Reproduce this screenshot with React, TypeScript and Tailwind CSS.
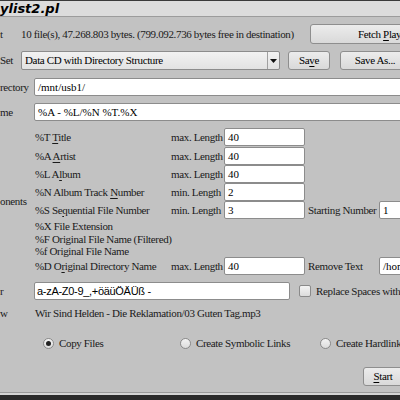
import type { ReactNode } from 'react';

const serif = { fontFamily: '"Liberation Serif", "DejaVu Serif", serif' };

function U({ children }: { children: ReactNode }) {
  return <span className="underline underline-offset-2">{children}</span>;
}

function Field({ value, className = '' }: { value: string; className?: string }) {
  return (
    <div
      className={`flex h-[18px] shrink-0 items-center overflow-hidden whitespace-nowrap rounded-[2px] border border-[#8c8c8c] bg-white pl-[3px] text-[11px] tracking-normal text-black ${className}`}
    >
      {value}
    </div>
  );
}

function Button({ children, className = '' }: { children: ReactNode; className?: string }) {
  return (
    <div
      className={`flex shrink-0 items-center justify-center whitespace-nowrap rounded-[3px] border border-[#8e8e8e] bg-gradient-to-b from-[#ececec] to-[#d9d9d9] text-black ${className}`}
    >
      <span>{children}</span>
    </div>
  );
}

function Radio({ checked }: { checked?: boolean }) {
  return (
    <div className="flex h-[11px] w-[11px] shrink-0 items-center justify-center rounded-full border border-[#8a8a8a] bg-gradient-to-b from-[#f4f4f4] to-[#dcdcdc]">
      {checked && <div className="h-[5px] w-[5px] rounded-full bg-[#222]" />}
    </div>
  );
}

function CompRow({
  name,
  len,
  value,
  extraLabel,
  extraValue,
}: {
  name: ReactNode;
  len?: string;
  value?: string;
  extraLabel?: string;
  extraValue?: string;
}) {
  return (
    <div className="flex h-[18px] items-center">
      <div className="w-[137px] shrink-0 whitespace-nowrap pl-[1px]">{name}</div>
      {len && (
        <>
          <div className="w-[53px] shrink-0 whitespace-nowrap">{len}</div>
          <Field value={value ?? ''} className="w-[81px]" />
        </>
      )}
      {extraLabel && (
        <>
          <div className="ml-[3px] w-[71px] shrink-0 whitespace-nowrap">{extraLabel}</div>
          <Field value={extraValue ?? ''} className="w-[40px]" />
        </>
      )}
    </div>
  );
}

export default function App() {
  return (
    <div
      className="flex h-[400px] w-[400px] flex-col overflow-hidden bg-[#c2c2c2] text-[11px] tracking-[-0.35px] text-[#1a1a1a]"
      style={serif}
    >
      {/* title bar */}
      <div className="flex h-[17px] shrink-0 items-center border-t border-b border-t-[#3a3a3a] border-b-[#9c9c9c] bg-[#dcdcdc]">
        <span
          className="text-[13px] font-bold italic tracking-normal text-black"
          style={{ fontFamily: '"DejaVu Sans", "Liberation Sans", sans-serif' }}
        >
          ylist2.pl
        </span>
      </div>

      {/* status */}
      <div className="mt-[7px] flex h-[20px] items-center">
        <div className="w-[21px] shrink-0">t</div>
        <div className="w-[289px] shrink-0 whitespace-nowrap">
          10 file(s), 47.268.803 bytes. (799.092.736 bytes free in destination)
        </div>
        <Button className="h-[20px] w-[110px] justify-start pl-[47px]">
          Fetch <U>P</U>lay
        </Button>
      </div>

      {/* preset */}
      <div className="mt-[7px] flex h-[19px] items-center">
        <div className="w-[21px] shrink-0">Set</div>
        <div className="flex h-[19px] w-[259px] shrink-0 items-center rounded-[2px] border border-[#8c8c8c] bg-gradient-to-b from-[#f2f2f2] to-[#e2e2e2]">
          <div className="flex-1 whitespace-nowrap pl-[3px] text-black">Data CD with Directory Structure</div>
          <div className="flex h-full w-[12px] items-center justify-center border-l border-[#a0a0a0]">
            <svg width="7" height="4" viewBox="0 0 7 4">
              <path d="M0 0h7L3.5 4z" fill="#111" />
            </svg>
          </div>
        </div>
        <Button className="ml-[8px] h-[19px] w-[42px]">
          Sa<U>v</U>e
        </Button>
        <Button className="ml-[10px] h-[19px] w-[70px]">Save As...</Button>
      </div>

      {/* directory */}
      <div className="mt-[8px] flex h-[18px] items-center">
        <div className="w-[34px] shrink-0 whitespace-nowrap">rectory</div>
        <Field value="/mnt/usb1/" className="w-[380px]" />
      </div>

      {/* name */}
      <div className="mt-[7px] flex h-[18px] items-center">
        <div className="w-[34px] shrink-0">me</div>
        <Field value="%A - %L/%N %T.%X" className="w-[380px]" />
      </div>

      {/* components */}
      <div className="mt-[7px] flex">
        <div className="flex w-[34px] shrink-0 items-center">onents</div>
        <div className="flex flex-col">
          <CompRow name={<>%T <U>T</U>itle</>} len="max. Length" value="40" />
          <div className="h-[1px]" />
          <CompRow name={<>%A <U>A</U>rtist</>} len="max. Length" value="40" />
          <CompRow name={<>%L A<U>l</U>bum</>} len="max. Length" value="40" />
          <CompRow name={<>%N Album Track <U>N</U>umber</>} len="min. Length" value="2" />
          <CompRow
            name={<>%S Se<U>q</U>uential File Number</>}
            len="min. Length"
            value="3"
            extraLabel="Starting Number"
            extraValue="1"
          />
          <div className="mt-[1px] flex h-[13px] items-center pl-[1px]">%X File Extension</div>
          <div className="flex h-[12px] items-center pl-[1px]">%F Original File Name (Filtered)</div>
          <div className="flex h-[12px] items-center pl-[1px]">%f Original File Name</div>
          <CompRow
            name={<>%D O<U>r</U>iginal Directory Name</>}
            len="max. Length"
            value="40"
            extraLabel="Remove Text"
            extraValue="/home"
          />
        </div>
      </div>

      {/* filter */}
      <div className="mt-[7px] flex h-[18px] items-center">
        <div className="w-[34px] shrink-0">r</div>
        <div
          className="flex h-[18px] w-[256px] shrink-0 items-center rounded-[2px] border border-[#8c8c8c] bg-white pl-[2px] text-[11px] tracking-[-0.3px] text-black"
          style={{ fontFamily: '"Liberation Sans", "DejaVu Sans", sans-serif' }}
        >
          a-zA-Z0-9_,+öäüÖÄÜß -
        </div>
        <div className="ml-[9px] h-[12px] w-[12px] shrink-0 rounded-[2px] border border-[#8a8a8a] bg-gradient-to-b from-[#f4f4f4] to-[#dcdcdc]" />
        <div className="ml-[5px] whitespace-nowrap">Replace Spaces with _</div>
      </div>

      {/* preview */}
      <div className="mt-[4px] flex h-[18px] items-center">
        <div className="w-[35px] shrink-0">w</div>
        <div className="whitespace-nowrap">Wir Sind Helden - Die Reklamation/03 Guten Tag.mp3</div>
      </div>

      {/* mode */}
      <div className="mt-[12px] flex h-[18px] items-center">
        <div className="ml-[43px] flex w-[137px] shrink-0 items-center gap-[5px]">
          <Radio checked />
          <span>Copy Files</span>
        </div>
        <div className="flex w-[140px] shrink-0 items-center gap-[5px]">
          <Radio />
          <span className="whitespace-nowrap">Create Symbolic Links</span>
        </div>
        <div className="flex shrink-0 items-center gap-[5px] whitespace-nowrap">
          <Radio />
          <span>Create Hardlinks</span>
        </div>
      </div>

      {/* start */}
      <div className="mt-[15px] flex h-[19px] justify-end">
        <Button className="h-[19px] w-[40px] translate-x-[3px]">
          <U>S</U>tart
        </Button>
      </div>

      <div className="flex-1" />
      <div className="h-[3px] shrink-0 border-t border-[#9a9a9a] bg-[#d4d4d4]" />
      <div className="h-[5px] shrink-0 bg-[#2a2a2a]" />
    </div>
  );
}
